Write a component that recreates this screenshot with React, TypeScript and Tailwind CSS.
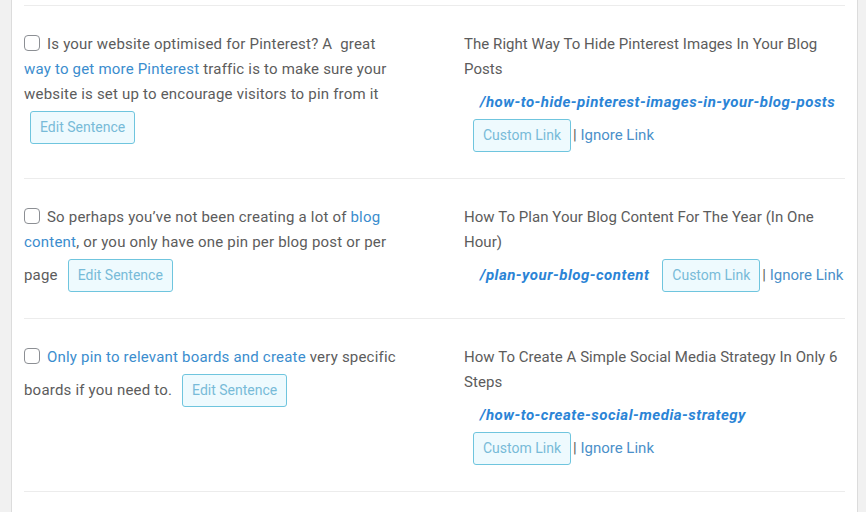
import React from "react";

type Part = { t: string; link?: boolean };

type Row = {
  sentence: Part[];
  title: string;
  slug: string;
};

const rows: Row[] = [
  {
    sentence: [
      { t: "Is your website optimised for Pinterest? A\u00a0 great " },
      { t: "way to get more Pinterest", link: true },
      { t: " traffic is to make sure your website is set up to encourage visitors to pin from it" },
    ],
    title: "The Right Way To Hide Pinterest Images In Your Blog Posts",
    slug: "/how-to-hide-pinterest-images-in-your-blog-posts",
  },
  {
    sentence: [
      { t: "So perhaps you\u2019ve not been creating a lot of " },
      { t: "blog content", link: true },
      { t: ", or you only have one pin per blog post or per page" },
    ],
    title: "How To Plan Your Blog Content For The Year (In One Hour)",
    slug: "/plan-your-blog-content",
  },
  {
    sentence: [
      { t: "Only pin to relevant boards and create", link: true },
      { t: " very specific boards if you need to." },
    ],
    title: "How To Create A Simple Social Media Strategy In Only 6 Steps",
    slug: "/how-to-create-social-media-strategy",
  },
];

function LightButton({ label, className }: { label: string; className?: string }) {
  return (
    <button
      className={`h-[33px] px-[9px] rounded-[3px] border border-[#6fc5de] bg-[#eefafe] text-[14px] tracking-normal text-[#78bbd8] ${className ?? ""}`}
    >
      {label}
    </button>
  );
}

function SentenceRow({ row }: { row: Row }) {
  return (
    <div className="flex border-b border-[#ececec] py-[26px]">
      <div className="w-[440px] pr-[58px] text-[15px] leading-[25px] tracking-[0.2px] text-[#5c5c5c]">
        <input
          type="checkbox"
          className="appearance-none w-4 h-4 rounded-[4px] border border-[#8c8f94] bg-white align-[-2px] mr-[7px]"
        />
        {row.sentence.map((p, i) =>
          p.link ? (
            <span key={i} className="text-[#3b8dce]">
              {p.t}
            </span>
          ) : (
            <span key={i}>{p.t}</span>
          )
        )}{" "}
        <LightButton label="Edit Sentence" className="inline-block mt-[4px] ml-[6px]" />
      </div>
      <div className="flex-1 text-[15px] leading-[25px] text-[#5c5c5c]">
        <div className="tracking-[0.05px]">{row.title}</div>
        <div className="mt-[4px] flex flex-wrap items-center">
          <span className="h-[33px] flex items-center pl-4 mr-1 font-bold italic tracking-[0.5px] text-[#2b84d6]">
            {row.slug}
          </span>
          <LightButton label="Custom Link" className="ml-[9px]" />
          <span className="ml-[2px] whitespace-nowrap">
            | <span className="text-[#4b90c9]">Ignore Link</span>
          </span>
        </div>
      </div>
    </div>
  );
}

export default function App() {
  return (
    <div className="w-[866px] h-[512px] overflow-hidden flex bg-white" style={{ fontFamily: "Roboto, 'Liberation Sans', sans-serif" }}>
      <div className="w-[12px] bg-[#f1f1f1] border-r border-[#dcdcdc]" />
      <div className="flex-1 pl-[12px] pr-[12px]">
        <div className="h-[6px] border-b border-[#ececec]" />
        {rows.map((r, i) => (
          <SentenceRow key={i} row={r} />
        ))}
      </div>
      <div className="w-[9px] bg-[#f1f1f1] border-l border-[#dcdcdc]" />
    </div>
  );
}
